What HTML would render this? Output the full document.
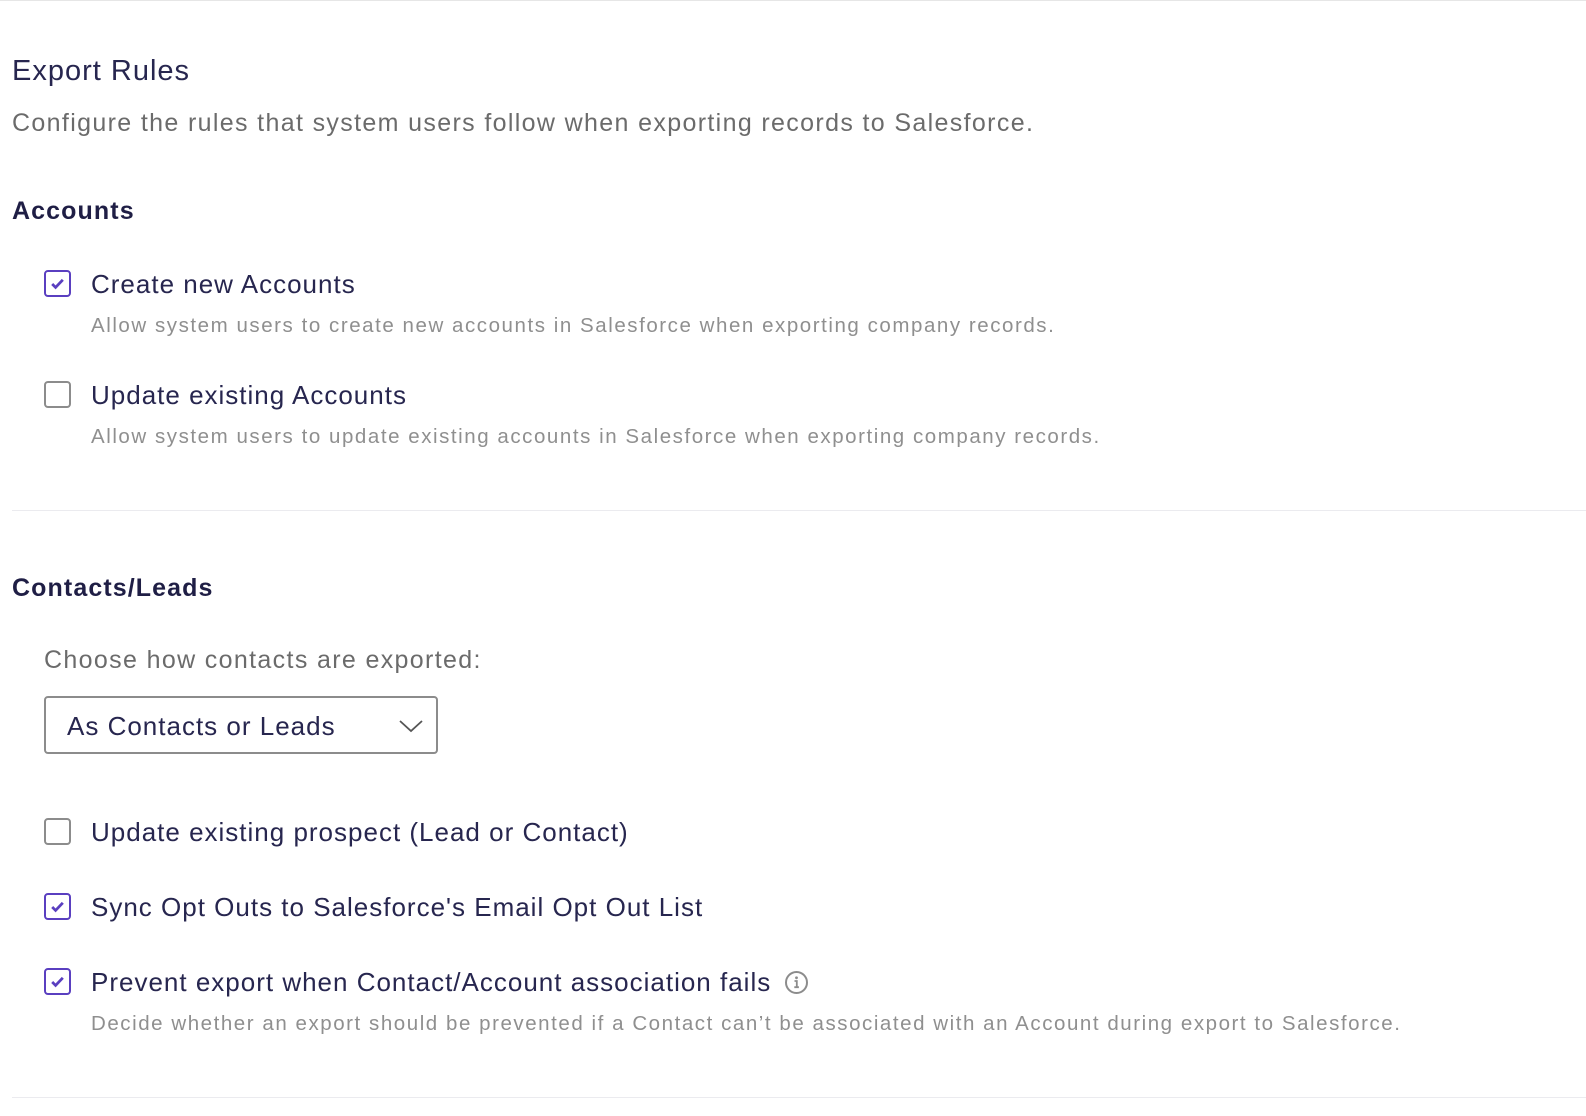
<!DOCTYPE html>
<html><head><meta charset="utf-8"><style>
body{margin:0;width:1586px;height:1116px;background:#fff;font-family:"Liberation Sans",sans-serif;position:relative;overflow:hidden;color:#27264f}
.a{position:absolute;white-space:nowrap}
.hr{position:absolute;left:12px;right:0;height:1px;background:#ebebef}
.t{font-size:29px;color:#27264f;letter-spacing:1px}
.sub{font-size:25px;color:#6b6b6b;letter-spacing:1.35px}
.h{font-size:25px;font-weight:bold;color:#1f1e45;letter-spacing:1.1px}
.lab{font-size:26px;color:#27264f;letter-spacing:1px}
.d{font-size:20.5px;color:#8f8f8f;letter-spacing:1.55px}
.cb{position:absolute;left:44px;width:27px;height:27px;border:2px solid #8c8c8c;border-radius:4px;box-sizing:border-box}
.cb.on{border-color:#5a3fc0}
.cb.on svg{position:absolute;left:3px;top:3px}
</style></head><body>
<div class="hr" style="top:0;left:0;background:#e6e6e6"></div>
<div class="a t" style="left:12px;top:55px">Export Rules</div>
<div class="a sub" style="left:12px;top:109px">Configure the rules that system users follow when exporting records to Salesforce.</div>
<div class="a h" style="left:12px;top:197px">Accounts</div>

<div class="cb on" style="top:270px"><svg width="17" height="17" viewBox="0 0 16 16"><path d="M3 8.5l3.2 3.2L13 4.5" stroke="#5a3fc0" stroke-width="2.6" fill="none"/></svg></div>
<div class="a lab" style="left:91px;top:269px">Create new Accounts</div>
<div class="a d" style="left:91px;top:314px">Allow system users to create new accounts in Salesforce when exporting company records.</div>

<div class="cb" style="top:381px"></div>
<div class="a lab" style="left:91px;top:380px">Update existing Accounts</div>
<div class="a d" style="left:91px;top:425px">Allow system users to update existing accounts in Salesforce when exporting company records.</div>

<div class="hr" style="top:510px"></div>
<div class="a h" style="left:12px;top:574px">Contacts/Leads</div>
<div class="a sub" style="left:44px;top:646px">Choose how contacts are exported:</div>
<div class="a" style="left:44px;top:696px;width:394px;height:58px;border:2px solid #8c8c8c;border-radius:4px;box-sizing:border-box"></div>
<div class="a lab" style="left:67px;top:711px">As Contacts or Leads</div>
<svg class="a" style="left:398px;top:718px" width="26" height="16" viewBox="0 0 26 16"><path d="M2 3l11 10L24 3" stroke="#555" stroke-width="1.8" fill="none"/></svg>

<div class="cb" style="top:818px"></div>
<div class="a lab" style="left:91px;top:817px">Update existing prospect (Lead or Contact)</div>

<div class="cb on" style="top:893px"><svg width="17" height="17" viewBox="0 0 16 16"><path d="M3 8.5l3.2 3.2L13 4.5" stroke="#5a3fc0" stroke-width="2.6" fill="none"/></svg></div>
<div class="a lab" style="left:91px;top:892px">Sync Opt Outs to Salesforce's Email Opt Out List</div>

<div class="cb on" style="top:968px"><svg width="17" height="17" viewBox="0 0 16 16"><path d="M3 8.5l3.2 3.2L13 4.5" stroke="#5a3fc0" stroke-width="2.6" fill="none"/></svg></div>
<div class="a lab" style="left:91px;top:967px">Prevent export when Contact/Account association fails</div>
<svg class="a" style="left:784px;top:970px" width="25" height="25" viewBox="0 0 25 25"><circle cx="12.5" cy="12.5" r="10.5" stroke="#8c8c8c" stroke-width="2" fill="none"/><circle cx="12.5" cy="7.8" r="1.4" fill="#8c8c8c"/><path d="M10.5 11h2.3v6M10.3 17.2h4.6" stroke="#8c8c8c" stroke-width="1.8" fill="none"/></svg>
<div class="a d" style="left:91px;top:1012px">Decide whether an export should be prevented if a Contact can’t be associated with an Account during export to Salesforce.</div>
<div class="hr" style="top:1097px"></div>
</body></html>
